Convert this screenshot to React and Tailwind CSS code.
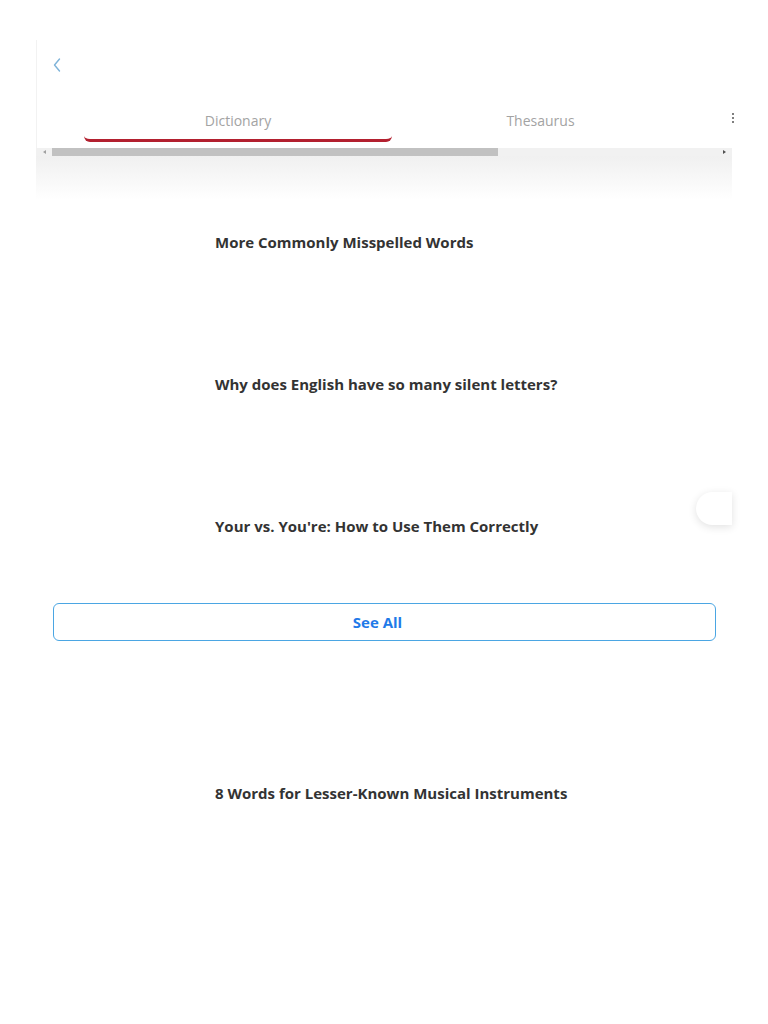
const articles = [
  "More Commonly Misspelled Words",
  "Why does English have so many silent letters?",
  "Your vs. You're: How to Use Them Correctly",
];

const font = { fontFamily: '"Open Sans", "Liberation Sans", sans-serif' };

function Header() {
  return (
    <div className="relative ml-[36px] w-[696px]">
      <div className="h-[108px] bg-white border-l border-[#f2f2f2] pt-[18px]">
        <div className="pl-[16px] h-[14px]">
          <svg width="8" height="14" viewBox="0 0 8 14" fill="none">
            <path d="M6.5 1 L1.5 7 L6.5 13" stroke="#7eb3d9" strokeWidth="1.4" strokeLinecap="round" strokeLinejoin="round" />
          </svg>
        </div>
        <div className="flex pl-[47px] pr-[43px] mt-[39px]">
          <div className="w-[308px] h-[31px] flex justify-center items-start border-b-[3px] border-[#b3202f] rounded-b-[6px]">
            <span className="text-[14px] leading-[20px] text-[#a3a3a3]" style={font}>Dictionary</span>
          </div>
          <div className="flex-1 flex justify-center">
            <span className="text-[14px] leading-[20px] text-[#a3a3a3]" style={font}>Thesaurus</span>
          </div>
        </div>
      </div>
      <div className="absolute right-[-2px] top-[73px] flex flex-col gap-[2px]">
        <span className="w-[2px] h-[2px] bg-[#555] rounded-full" />
        <span className="w-[2px] h-[2px] bg-[#555] rounded-full" />
        <span className="w-[2px] h-[2px] bg-[#555] rounded-full" />
      </div>
      <div className="h-[8px] bg-[#f1f1f1] flex items-center">
        <div className="w-[16px] flex justify-center">
          <div className="w-0 h-0 border-y-[2px] border-y-transparent border-r-[3px] border-r-[#a0a0a0]" />
        </div>
        <div className="w-[446px] h-[8px] bg-[#c1c1c1]" />
        <div className="flex-1" />
        <div className="w-[16px] flex justify-center">
          <div className="w-0 h-0 border-y-[2px] border-y-transparent border-l-[3px] border-l-[#505050]" />
        </div>
      </div>
      <div className="h-[44px] bg-gradient-to-b from-[#f0f0f0] to-white" />
    </div>
  );
}

function Title({ children }) {
  return (
    <h3 className="pl-[215px] text-[15px] leading-[20px] font-bold text-[#333333]" style={font}>
      {children}
    </h3>
  );
}

export default function App() {
  return (
    <div className="relative w-[768px] h-[1024px] bg-white overflow-hidden pt-[40px]">
      <Header />
      <div className="pt-[32px]">
        <div className="flex flex-col gap-[122px]">
          {articles.map((a) => (
            <Title key={a}>{a}</Title>
          ))}
        </div>
        <div className="pl-[53px] pr-[52px] mt-[67px]">
          <button
            className="w-full h-[38px] pr-[14px] rounded-[6px] border border-[#4ba6e3] bg-white text-[15px] font-bold text-[#1f7ae8]"
            style={font}
          >
            See All
          </button>
        </div>
        <div className="mt-[142px]">
          <Title>8 Words for Lesser-Known Musical Instruments</Title>
        </div>
      </div>
      <div className="absolute left-[696px] top-[492px] w-[36px] h-[33px] bg-white rounded-l-full shadow-[0_2px_8px_rgba(0,0,0,0.12)]" />
    </div>
  );
}
